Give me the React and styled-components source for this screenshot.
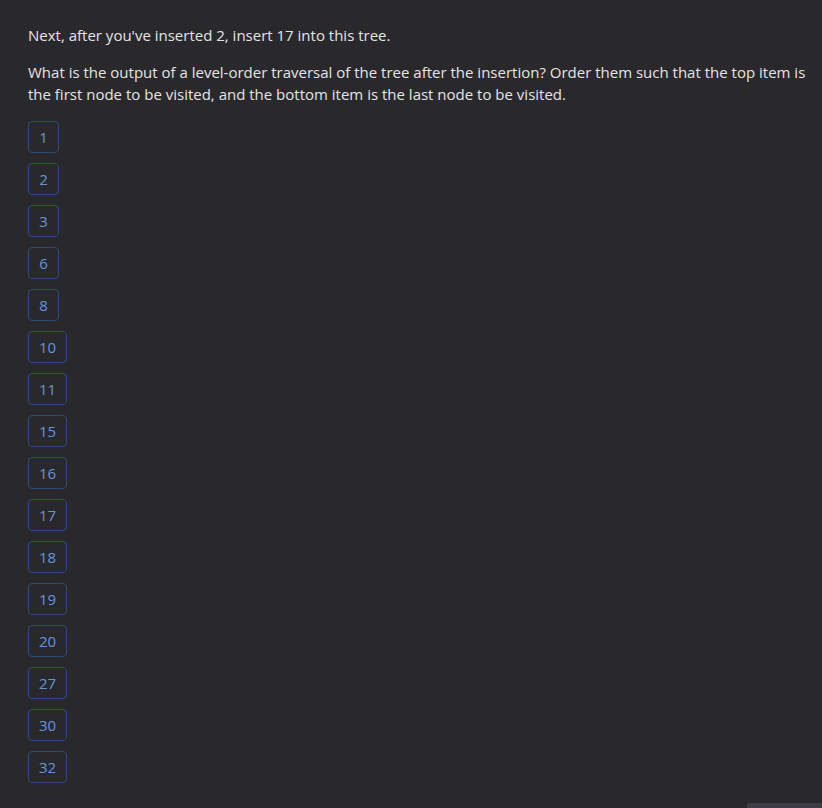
import styled, { createGlobalStyle } from "styled-components"

const GlobalStyle = createGlobalStyle`
  html, body {
    margin: 0;
    padding: 0;
    background: #29292c;
  }
  body {
    font-family: "Open Sans", "Liberation Sans", sans-serif;
    min-height: 808px;
  }
`

const items = [1, 2, 3, 6, 8, 10, 11, 15, 16, 17, 18, 19, 20, 27, 30, 32]

const App = () => {
    return (
        <>
        <GlobalStyle />
        <Page>
            <Prompt>Next, after you've inserted 2, insert 17 into this tree.</Prompt>
            <Prompt>
                What is the output of a level-order traversal of the tree after the insertion? Order them such that the top item is the first node to be visited, and the bottom item is the last node to be visited.
            </Prompt>
            <List>
                {items.map((item) => (
                    <Chip key={item}>{item}</Chip>
                ))}
            </List>
        </Page>
        <ScrollHint />
        </>
    )
}

export default App


const Page = styled.main`
padding: 24px 14px 0 28px;
display: flex;
flex-direction: column;
`

const Prompt = styled.p`
margin: 0 0 15px;
color: #e4e4e6;
font-size: 15px;
line-height: 22px;
`

const List = styled.div`
display: flex;
flex-direction: column;
align-items: flex-start;
gap: 10px;
margin-top: 1px;
`

const Chip = styled.div`
box-sizing: border-box;
height: 32px;
min-width: 31px;
padding: 0 10px;
border: 1px solid #2a4b80;
border-radius: 4px;
color: #6196dc;
font-size: 15px;
line-height: 30px;
text-align: center;
`

const ScrollHint = styled.div`
position: fixed;
right: 0;
bottom: 0;
width: 75px;
height: 5px;
background: #3d3d45;
border-radius: 2px 0 0 0;
`
